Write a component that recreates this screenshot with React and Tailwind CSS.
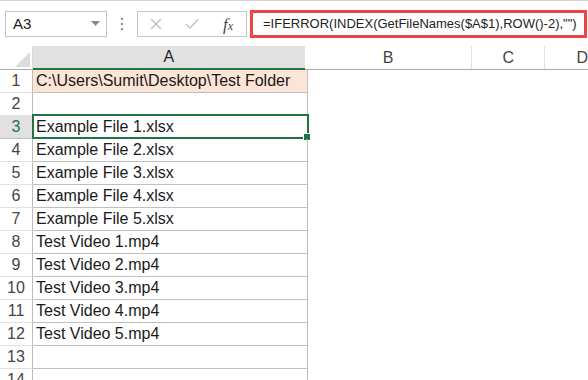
import React from "react";

const rows = [
  "C:\\Users\\Sumit\\Desktop\\Test Folder",
  "",
  "Example File 1.xlsx",
  "Example File 2.xlsx",
  "Example File 3.xlsx",
  "Example File 4.xlsx",
  "Example File 5.xlsx",
  "Test Video 1.mp4",
  "Test Video 2.mp4",
  "Test Video 3.mp4",
  "Test Video 4.mp4",
  "Test Video 5.mp4",
  "",
  "",
];

export default function App() {
  return (
    <div className="w-[588px] h-[380px] overflow-hidden bg-white border-t border-[#d4d4d4] font-['Liberation_Sans',Arial,sans-serif] text-[#1a1a1a]">
      {/* Toolbar */}
      <div className="h-[45px] flex items-start pt-[10px]">
        <div className="ml-[5px] w-[102px] h-[26px] border border-[#c6c6c6] flex items-center pl-[7px] pr-[6px] text-[15px] text-[#222]">
          <span className="flex-1">A3</span>
          <svg width="9" height="6" viewBox="0 0 9 6">
            <path d="M0 0 H9 L4.5 5 Z" fill="#8a8a8a" />
          </svg>
        </div>
        <div className="w-[30px] h-[26px] flex flex-col items-center justify-center gap-[3px]">
          <div className="w-[2px] h-[2px] bg-[#8a8a8a]" />
          <div className="w-[2px] h-[2px] bg-[#8a8a8a]" />
          <div className="w-[2px] h-[2px] bg-[#8a8a8a]" />
        </div>
        <div className="w-[110px] h-[26px] border border-[#c6c6c6] flex items-center">
          <div className="w-[36px] flex justify-center">
            <svg width="12" height="12" viewBox="0 0 12 12">
              <path d="M1 1 L11 11 M11 1 L1 11" stroke="#bdbdbd" strokeWidth="1.3" fill="none" />
            </svg>
          </div>
          <div className="w-[36px] flex justify-center">
            <svg width="14" height="12" viewBox="0 0 14 12">
              <path d="M1 6 L5 10 L13 1.5" stroke="#bdbdbd" strokeWidth="1.3" fill="none" />
            </svg>
          </div>
          <div className="w-[36px] flex justify-center">
            <span className="font-['Liberation_Serif',serif] italic text-[17px] text-[#444] leading-none">
              f<span className="text-[12px]">x</span>
            </span>
          </div>
        </div>
        <div className="ml-[3px] w-[337px] h-[28px] -mt-[1px] border-[3px] border-[#f04343] flex items-center pl-[10px] text-[13px] text-[#222] whitespace-nowrap overflow-hidden">
          =IFERROR(INDEX(GetFileNames($A$1),ROW()-2),"")
        </div>
      </div>

      {/* Column headers */}
      <div className="h-[24px] flex border-b border-[#ababab]">
        <div className="w-[33px] relative bg-white border-r border-[#dadada]">
          <svg className="absolute right-[2px] bottom-[2px]" width="15" height="15" viewBox="0 0 15 15">
            <path d="M15 0 V15 H0 Z" fill="#dcdcdc" />
          </svg>
        </div>
        <div className="w-[275px] bg-[#e1e1e1] border-b-2 border-[#217346] -mb-[1px] flex items-center justify-center text-[16px] text-[#262626]">
          A
        </div>
        <div className="w-[169px] flex items-center justify-center text-[16px] text-[#444] border-r border-[#e1e1e1]">
          B
        </div>
        <div className="w-[74px] flex items-center justify-center text-[16px] text-[#444] border-r border-[#e1e1e1]">
          C
        </div>
        <div className="flex-1 flex items-center pl-[31px] text-[16px] text-[#444]">D</div>
      </div>

      {/* Rows */}
      {rows.map((text, i) => {
        const n = i + 1;
        const sel = n === 3;
        return (
          <div key={n} className="h-[23px] flex">
            <div
              className={
                sel
                  ? "w-[33px] bg-[#e1e1e1] border-b border-r border-[#bdbdbd] flex items-center justify-center text-[16px] text-[#217346]"
                  : "w-[33px] bg-white border-b border-[#e1e1e1] border-r border-r-[#bdbdbd] flex items-center justify-center text-[16px] text-[#444]"
              }
            >
              {n}
            </div>
            <div
              className={
                n === 1
                  ? "w-[275px] relative bg-[#fce4d6] border-b border-r border-[#bfbfbf] flex items-center pl-[3px] text-[16px] whitespace-nowrap"
                  : "w-[275px] relative border-b border-r border-[#bfbfbf] flex items-center pl-[3px] text-[16px] whitespace-nowrap"
              }
            >
              {text}
              {sel && (
                <>
                  <div className="absolute -left-[1px] -top-[2px] w-[277px] h-[25px] border-2 border-[#217346]" />
                  <div className="absolute -right-[4px] bottom-[-3px] w-[6px] h-[6px] bg-[#217346] border border-white box-content" />
                </>
              )}
            </div>
            <div className="flex-1" />
          </div>
        );
      })}
    </div>
  );
}
